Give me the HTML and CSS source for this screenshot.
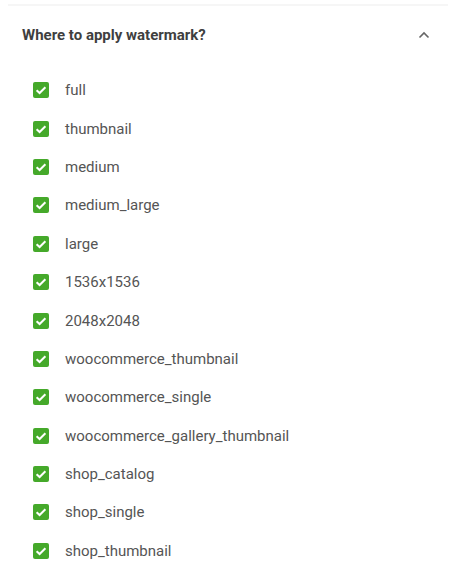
FILE: index.html
```html
<!DOCTYPE html>
<html>
<head>
<meta charset="utf-8">
<link rel="stylesheet" href="styles.css">
</head>
<body>
<div class="panel">
  <div class="topline"></div>
  <div class="header">
    <span class="title">Where to apply watermark?</span>
    <svg class="chev" width="12" height="8" viewBox="0 0 12 8"><path d="M1.5 6.5 L6 2 L10.5 6.5" fill="none" stroke="#666" stroke-width="1.6"/></svg>
  </div>
  <ul class="list">
    <li><span class="cb"><svg width="16" height="16" viewBox="0 0 16 16"><path d="M3.6 8.2 L6.6 11 L12.4 5.2" fill="none" stroke="#fff" stroke-width="2"/></svg></span>full</li>
    <li><span class="cb"><svg width="16" height="16" viewBox="0 0 16 16"><path d="M3.6 8.2 L6.6 11 L12.4 5.2" fill="none" stroke="#fff" stroke-width="2"/></svg></span>thumbnail</li>
    <li><span class="cb"><svg width="16" height="16" viewBox="0 0 16 16"><path d="M3.6 8.2 L6.6 11 L12.4 5.2" fill="none" stroke="#fff" stroke-width="2"/></svg></span>medium</li>
    <li><span class="cb"><svg width="16" height="16" viewBox="0 0 16 16"><path d="M3.6 8.2 L6.6 11 L12.4 5.2" fill="none" stroke="#fff" stroke-width="2"/></svg></span>medium_large</li>
    <li><span class="cb"><svg width="16" height="16" viewBox="0 0 16 16"><path d="M3.6 8.2 L6.6 11 L12.4 5.2" fill="none" stroke="#fff" stroke-width="2"/></svg></span>large</li>
    <li><span class="cb"><svg width="16" height="16" viewBox="0 0 16 16"><path d="M3.6 8.2 L6.6 11 L12.4 5.2" fill="none" stroke="#fff" stroke-width="2"/></svg></span>1536x1536</li>
    <li><span class="cb"><svg width="16" height="16" viewBox="0 0 16 16"><path d="M3.6 8.2 L6.6 11 L12.4 5.2" fill="none" stroke="#fff" stroke-width="2"/></svg></span>2048x2048</li>
    <li><span class="cb"><svg width="16" height="16" viewBox="0 0 16 16"><path d="M3.6 8.2 L6.6 11 L12.4 5.2" fill="none" stroke="#fff" stroke-width="2"/></svg></span>woocommerce_thumbnail</li>
    <li><span class="cb"><svg width="16" height="16" viewBox="0 0 16 16"><path d="M3.6 8.2 L6.6 11 L12.4 5.2" fill="none" stroke="#fff" stroke-width="2"/></svg></span>woocommerce_single</li>
    <li><span class="cb"><svg width="16" height="16" viewBox="0 0 16 16"><path d="M3.6 8.2 L6.6 11 L12.4 5.2" fill="none" stroke="#fff" stroke-width="2"/></svg></span>woocommerce_gallery_thumbnail</li>
    <li><span class="cb"><svg width="16" height="16" viewBox="0 0 16 16"><path d="M3.6 8.2 L6.6 11 L12.4 5.2" fill="none" stroke="#fff" stroke-width="2"/></svg></span>shop_catalog</li>
    <li><span class="cb"><svg width="16" height="16" viewBox="0 0 16 16"><path d="M3.6 8.2 L6.6 11 L12.4 5.2" fill="none" stroke="#fff" stroke-width="2"/></svg></span>shop_single</li>
    <li><span class="cb"><svg width="16" height="16" viewBox="0 0 16 16"><path d="M3.6 8.2 L6.6 11 L12.4 5.2" fill="none" stroke="#fff" stroke-width="2"/></svg></span>shop_thumbnail</li>
  </ul>
</div>
</body>
</html>
```
FILE: styles.css
```css
html, body {
  margin: 0;
  padding: 0;
  background: #fff;
}
body {
  font-family: Roboto, "Liberation Sans", sans-serif;
  width: 474px;
  height: 567px;
  overflow: hidden;
}
.panel {
  padding-top: 4px;
}
.topline {
  height: 2px;
  margin: 0 26px 0 8px;
  background: #f6f6f6;
}
.header {
  display: flex;
  align-items: center;
  justify-content: space-between;
  padding: 0 44px 0 22px;
  height: 57px;
}
.title {
  font-size: 15px;
  font-weight: 700;
  color: #3f3f3f;
}
.chev {
  display: block;
}
.list {
  list-style: none;
  margin: 0;
  padding: 8px 0 0 33px;
}
.list li {
  display: flex;
  align-items: center;
  height: 38.4px;
  font-size: 15px;
  color: #555;
}
.cb {
  width: 16px;
  height: 16px;
  border-radius: 2px;
  background: #45a92a;
  margin-right: 16px;
  display: flex;
}
.cb svg {
  display: block;
}
```
